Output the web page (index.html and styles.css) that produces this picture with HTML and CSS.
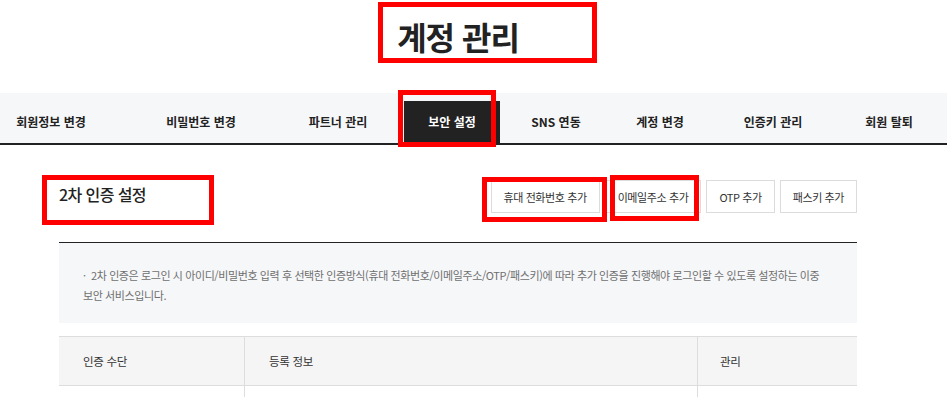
FILE: index.html
```html
<!DOCTYPE html>
<html lang="ko">
<head>
    <meta charset="UTF-8">
    <meta name="viewport" content="width=device-width, initial-scale=1.0">
    <title>계정 관리</title>
    <link rel="stylesheet" href="styles.css">
</head>
<body>

<div class="wrap">
    <h1 class="page-title">계정 관리</h1>
</div>

<nav class="tabs">
    <a href="#">회원정보 변경</a>
    <a href="#">비밀번호 변경</a>
    <a href="#">파트너 관리</a>
    <a href="#" class="active">보안 설정</a>
    <a href="#">SNS 연동</a>
    <a href="#">계정 변경</a>
    <a href="#">인증키 관리</a>
    <a href="#">회원 탈퇴</a>
</nav>

<div class="wrap">
    <div class="section-head">
        <h2>2차 인증 설정</h2>
        <div class="btn-group">
            <button type="button">휴대 전화번호 추가</button>
            <button type="button">이메일주소 추가</button>
            <button type="button">OTP 추가</button>
            <button type="button">패스키 추가</button>
        </div>
    </div>

    <div class="notice">
        <p>·&nbsp; 2차 인증은 로그인 시 아이디/비밀번호 입력 후 선택한 인증방식(휴대 전화번호/이메일주소/OTP/패스키)에 따라 추가 인증을 진행해야 로그인할 수 있도록 설정하는 이중 보안 서비스입니다.</p>
    </div>

    <table class="auth-table">
        <thead>
            <tr>
                <th class="col-type">인증 수단</th>
                <th class="col-info">등록 정보</th>
                <th class="col-manage">관리</th>
            </tr>
        </thead>
        <tbody>
            <tr>
                <td></td>
                <td></td>
                <td></td>
            </tr>
        </tbody>
    </table>
</div>

<!-- review marks -->
<div class="mark mark-title"></div>
<div class="mark mark-tab"></div>
<div class="mark mark-head"></div>
<div class="mark mark-phone"></div>
<div class="mark mark-email"></div>

</body>
</html>
```

FILE: styles.css
```css
body {
    font-family: "Noto Sans CJK KR", "Noto Sans", sans-serif;
    margin: 0;
    padding: 0;
    background-color: #fff;
    color: #222;
    overflow: hidden;
}

.wrap {
    width: 798px;
    margin-left: 59px;
}

.page-title {
    margin: 0;
    height: 93px;
    padding-top: 19px;
    box-sizing: border-box;
    font-size: 32px;
    line-height: 34px;
    font-weight: bold;
    letter-spacing: -1px;
    text-align: center;
    color: #222;
}

/* Tabs */
.tabs {
    display: grid;
    grid-template-columns: 102px 198px 76px 152px 56px 152px 74px 158px;
    justify-items: center;
    background-color: #f6f7f9;
    padding-top: 8px;
    border-bottom: 2px solid #222;
    overflow: hidden;
}

.tabs a {
    display: block;
    height: 42px;
    line-height: 42px;
    font-size: 12px;
    font-weight: bold;
    color: #222;
    text-decoration: none;
    white-space: nowrap;
}

.tabs a.active {
    background-color: #222;
    color: #fff;
    width: 96px;
    text-align: center;
}

/* Section head */
.section-head {
    display: flex;
    justify-content: space-between;
    align-items: flex-start;
    margin-top: 35px;
    height: 62px;
}

.section-head h2 {
    margin: 0;
    padding-top: 2px;
    font-size: 16px;
    line-height: 24px;
    font-weight: 500;
    letter-spacing: -0.6px;
    color: #222;
}

.btn-group {
    display: flex;
    gap: 5px;
}

.btn-group button {
    height: 33px;
    padding: 0 12px;
    background-color: #fff;
    border: 1px solid #dcdcdc;
    font-family: inherit;
    font-size: 11px;
    letter-spacing: -0.4px;
    color: #333;
}

/* Notice */
.notice {
    border-top: 1px solid #222;
    background-color: #f6f7f9;
    padding: 22px 24px 18px;
}

.notice p {
    margin: 0;
    font-size: 11px;
    line-height: 20px;
    letter-spacing: -0.4px;
    word-break: keep-all;
    color: #6f6f6f;
}

/* Table */
.auth-table {
    width: 100%;
    margin-top: 13px;
    table-layout: fixed;
    border-collapse: collapse;
    border-top: 1px solid #ddd;
}

.auth-table th {
    height: 48px;
    padding: 0 24px;
    background-color: #f5f5f5;
    border-bottom: 1px solid #ddd;
    font-size: 11.5px;
    font-weight: normal;
    letter-spacing: -0.3px;
    text-align: left;
    color: #333;
}

.auth-table td {
    height: 48px;
    border-bottom: 1px solid #ddd;
}

.auth-table th + th,
.auth-table td + td {
    border-left: 1px solid #ddd;
}

.col-type {
    width: 137px;
}

.col-info {
    padding-left: 26px;
}

.col-manage {
    width: 113px;
}

.auth-table .col-manage {
    padding-left: 22px;
}

/* Red review marks */
.mark {
    position: absolute;
    border: 5px solid #ff0000;
    box-sizing: border-box;
}

.mark-title {
    left: 378px;
    top: 2px;
    width: 219px;
    height: 61px;
}

.mark-tab {
    left: 398px;
    top: 90px;
    width: 98px;
    height: 57px;
}

.mark-head {
    left: 42px;
    top: 175px;
    width: 172px;
    height: 50px;
}

.mark-phone {
    left: 482px;
    top: 177px;
    width: 125px;
    height: 45px;
}

.mark-email {
    left: 610px;
    top: 175px;
    width: 89px;
    height: 46px;
}
```
